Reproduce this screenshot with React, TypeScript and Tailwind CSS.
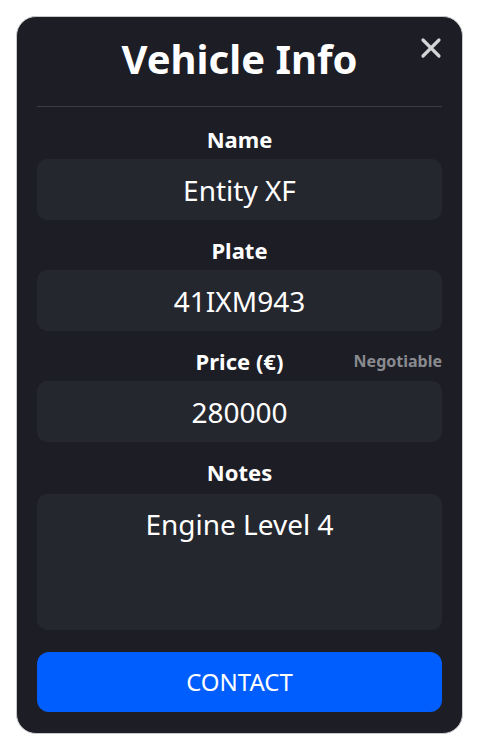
import React, { useState } from 'react';

const Field: React.FC<{ label: string; value: string; extra?: string }> = ({ label, value, extra }) => (
  <div className="flex flex-col">
    <div className="relative flex h-7 items-center justify-center">
      <span className="text-[22px] font-bold leading-7 text-white">{label}</span>
      {extra && (
        <span className="absolute right-0 text-[16px] font-bold text-[#8a8b90]">{extra}</span>
      )}
    </div>
    <div className="mt-[6px] flex h-[61px] items-center justify-center rounded-[10px] bg-[#25272f] text-[28px] text-white">
      {value}
    </div>
  </div>
);

const App: React.FC = () => {
  const [open, setOpen] = useState(true);
  if (!open) return null;

  return (
    <div className="min-h-[750px] bg-white p-4" style={{ fontFamily: '"Noto Sans", sans-serif' }}>
      <div className="flex h-[718px] w-[447px] flex-col rounded-[20px] border border-[#c9c9cc] bg-[#1c1d25] px-5">
        <div className="relative flex h-[90px] items-center justify-center border-b border-[#3b3c45] pb-[6px]">
          <h1 className="text-[40px] font-bold leading-none text-white">Vehicle Info</h1>
          <button
            onClick={() => setOpen(false)}
            className="absolute right-0 top-[20px] text-[#d4d4d8]"
            title="Close"
          >
            <svg width="22" height="22" viewBox="0 0 22 22" fill="none" stroke="currentColor" strokeWidth="3.2" strokeLinecap="round">
              <path d="M3 3 L19 19 M19 3 L3 19" />
            </svg>
          </button>
        </div>

        <div className="mt-[18px] flex flex-col gap-4">
          <Field label="Name" value="Entity XF" />
          <Field label="Plate" value="41IXM943" />
          <Field label="Price (€)" value="280000" extra="Negotiable" />
          <div className="flex flex-col">
            <div className="flex h-7 items-center justify-center">
              <span className="text-[22px] font-bold leading-7 text-white">Notes</span>
            </div>
            <div className="mt-[8px] h-[136px] rounded-[10px] bg-[#25272f] pt-[10px] text-center text-[28px] leading-[40px] text-white">
              Engine Level 4
            </div>
          </div>
        </div>

        <button className="mt-[22px] h-[60px] rounded-[12px] bg-[#005eff] text-[24px] text-white">
          CONTACT
        </button>
      </div>
    </div>
  );
};

export default App;
